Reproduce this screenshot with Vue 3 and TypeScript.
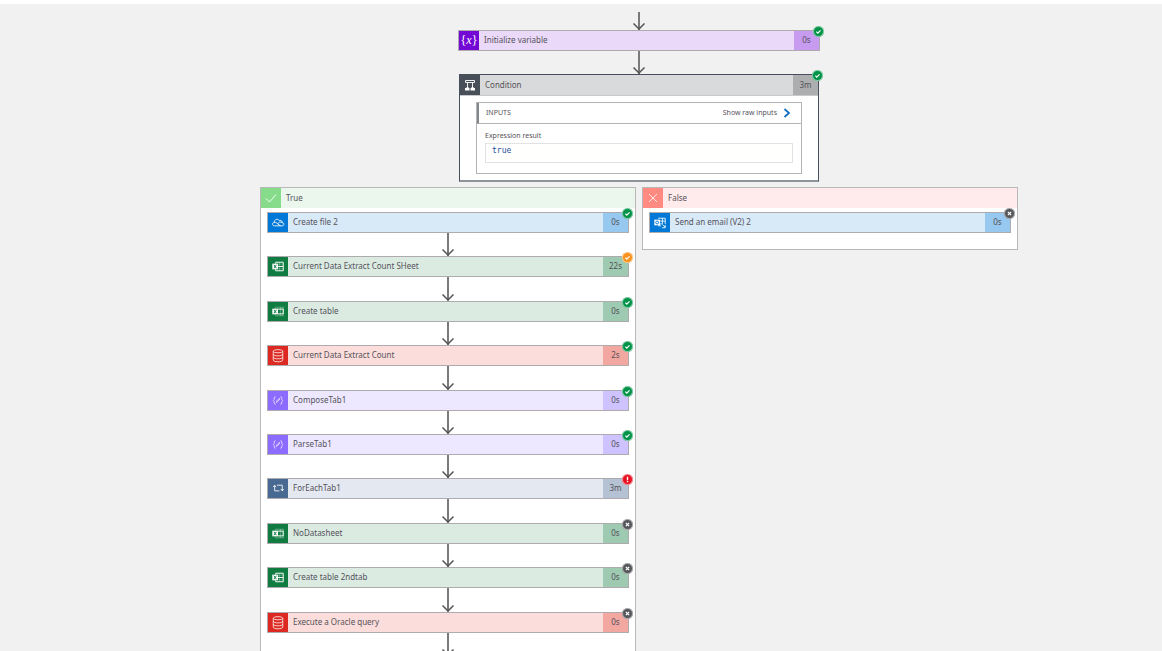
<script setup lang="ts">
type Status = 'ok' | 'warn' | 'fail' | 'skip'
interface Step {
  name: string
  time: string
  icon: string
  tone: string
  status: Status
}

const trueSteps: Step[] = [
  { name: 'Create file 2', time: '0s', icon: 'cloud', tone: 'blue', status: 'ok' },
  { name: 'Current Data Extract Count SHeet', time: '22s', icon: 'excel', tone: 'green', status: 'warn' },
  { name: 'Create table', time: '0s', icon: 'sheet', tone: 'green', status: 'ok' },
  { name: 'Current Data Extract Count', time: '2s', icon: 'database', tone: 'red', status: 'ok' },
  { name: 'ComposeTab1', time: '0s', icon: 'compose', tone: 'violet', status: 'ok' },
  { name: 'ParseTab1', time: '0s', icon: 'compose', tone: 'violet', status: 'ok' },
  { name: 'ForEachTab1', time: '3m', icon: 'loop', tone: 'slate', status: 'fail' },
  { name: 'NoDatasheet', time: '0s', icon: 'sheet', tone: 'green', status: 'skip' },
  { name: 'Create table 2ndtab', time: '0s', icon: 'excel', tone: 'green', status: 'skip' },
  { name: 'Execute a Oracle query', time: '0s', icon: 'database', tone: 'red', status: 'skip' },
]

const falseSteps: Step[] = [
  { name: 'Send an email (V2) 2', time: '0s', icon: 'outlook', tone: 'blue', status: 'skip' },
]
</script>

<template>
  <svg class="sprite" aria-hidden="true">
    <symbol id="i-condition" viewBox="0 0 20 20">
      <path d="M5.500 5.500h9v2h-9zM7.500 7.500v5M12.500 7.500v5" fill="none" stroke="currentColor" stroke-width=".9" />
      <path d="M6.500 12h2v1h1v2.500h-4.500V13h1.500zM11.500 12h2v1h1.500v2.500h-4.500V13h1z" fill="currentColor" />
    </symbol>
    <symbol id="i-cloud" viewBox="0 0 20 20">
      <path d="M6.500 13.500C3.500 13.500 3.500 10.200 6 10C6 6.500 10 5.500 11.500 8C13.500 7.300 14.800 8.800 14.500 10.200C17 10.500 16.500 13.500 14.300 13.500zM6 10C8 9.500 9 10.500 9.500 11.500L11.800 9.200L14.500 10.200M9.500 11.500L12.500 13.300" fill="none" stroke="currentColor" stroke-width=".9" />
    </symbol>
    <symbol id="i-excel" viewBox="0 0 20 20">
      <path d="M7.500 7V5.500h8v9h-8V13M10 10h5.500" fill="none" stroke="currentColor" />
      <path d="M10 7.500h5.500M10 12.500h5.500M11.500 5.500v9" fill="none" stroke="currentColor" stroke-width=".5" opacity=".6" />
      <path d="M4 7h6v6H4z" fill="currentColor" />
      <path d="M5.700 8.200l2.600 3.600M8.300 8.200l-2.600 3.600" stroke="#107c41" />
    </symbol>
    <symbol id="i-sheet" viewBox="0 0 20 20">
      <path d="M10 7.500h5.500v5H10" fill="none" stroke="currentColor" />
      <path d="M8 5.500h8M8 14.500h8M12.500 5.500v9M15.500 5.500v9M7.500 5v2M7.500 13v2" fill="none" stroke="currentColor" stroke-width=".6" opacity=".55" />
      <path d="M4 7h6v6H4z" fill="currentColor" />
      <path d="M5.700 8.200l2.600 3.600M8.300 8.200l-2.600 3.600" stroke="#107c41" />
    </symbol>
    <symbol id="i-database" viewBox="0 0 20 20">
      <g fill="none" stroke="currentColor" stroke-width=".8">
        <ellipse cx="10" cy="5.500" rx="5" ry="1.700" />
        <path d="M5 5.500v9.300c0 2.400 10 2.400 10 0V5.500M5 8.600c0 2.400 10 2.400 10 0M5 11.700c0 2.400 10 2.400 10 0" />
      </g>
    </symbol>
    <symbol id="i-compose" viewBox="0 0 20 20">
      <path d="M7.500 6q-1.500 0-1.500 1.500v1.500l-1 1 1 1v1.500q0 1.500 1.500 1.500M12.500 6q1.500 0 1.500 1.500v1.500l1 1-1 1v1.500q0 1.500-1.500 1.500M8.300 12.200l.5-1.800 2.500-2.700 .7 .8-2.500 2.700z" fill="none" stroke="currentColor" stroke-width=".7" />
    </symbol>
    <symbol id="i-loop" viewBox="0 0 20 20">
      <path d="M9 6.500h5.500v6M11.500 12.500H6.500v-5.500M5 8.500l1.500-2L8 8.500M13 10.500l1.500 2L16 10.500" fill="none" stroke="currentColor" stroke-width=".9" />
    </symbol>
    <symbol id="i-outlook" viewBox="0 0 20 20">
      <path d="M8 5.500h7.500v6M10 8.500h5.500M12.500 5.500v6M10 11.500h2M8 13.500h3M12.500 12l3 3M15.500 12.500v3H12" fill="none" stroke="currentColor" stroke-width=".9" />
      <path d="M4 7h6v6H4z" fill="currentColor" />
      <circle cx="7" cy="10" r="1.500" fill="none" stroke="#0078d7" />
    </symbol>
    <symbol id="i-true" viewBox="0 0 20 20">
      <path d="M5 10.500l3.500 3.500L15 6.500" fill="none" stroke="currentColor" stroke-width=".9" />
    </symbol>
    <symbol id="i-false" viewBox="0 0 20 20">
      <path d="M6 6l8 8M14 6l-8 8" fill="none" stroke="currentColor" stroke-width=".8" />
    </symbol>
    <symbol id="s-ok" viewBox="0 0 12 12">
      <path d="M3.700 6.200l1.500 1.500 3-3" fill="none" stroke="#fff" stroke-width="1.300" />
    </symbol>
    <symbol id="s-warn" viewBox="0 0 12 12">
      <path d="M3.700 6.200l1.500 1.500 3-3" fill="none" stroke="#fff" stroke-width="1.300" />
    </symbol>
    <symbol id="s-fail" viewBox="0 0 12 12">
      <path d="M6 3v3.700M6 7.700v1.300" stroke="#fff" stroke-width="1.500" />
    </symbol>
    <symbol id="s-skip" viewBox="0 0 12 12">
      <path d="M4.200 4.200l3.600 3.600M7.800 4.200l-3.600 3.600" stroke="#fff" stroke-width="1.300" />
    </symbol>
    <symbol id="arrow-head" viewBox="0 0 12 7">
      <path d="M.5 .5L6 6L11.500 .5" fill="none" stroke="#555" stroke-width="1.500" />
    </symbol>
  </svg>

  <main class="canvas">
    <div class="arrow lead"><svg class="head"><use href="#arrow-head" /></svg></div>
    <button type="button" class="card top-card purple">
      <span class="icon glyph">{<i>x</i>}</span>
      <span class="name">Initialize variable</span>
      <span class="time">0s</span>
      <svg class="badge ok"><use href="#s-ok" /></svg>
    </button>
    <div class="arrow link"><svg class="head"><use href="#arrow-head" /></svg></div>

    <section class="condition">
      <button type="button" class="card gray">
        <svg class="icon"><use href="#i-condition" /></svg>
        <span class="name">Condition</span>
        <span class="time">3m</span>
        <svg class="badge ok"><use href="#s-ok" /></svg>
      </button>
      <div class="inputs">
        <header class="inputs-head">
          <span>INPUTS</span>
          <button type="button" class="raw">
            Show raw inputs
            <svg class="chevron" viewBox="0 0 8 10"><path d="M1.500 1L6 5L1.500 9" fill="none" stroke="#0f6cbd" stroke-width="1.700" /></svg>
          </button>
        </header>
        <div class="result">
          <label for="expression">Expression result</label>
          <input id="expression" type="text" value="true" readonly>
        </div>
      </div>
    </section>

    <div class="branches">
      <section class="branch yes">
        <header class="branch-head">
          <svg class="icon"><use href="#i-true" /></svg>
          <span class="name">True</span>
        </header>
        <ol class="steps chain">
          <li v-for="step in trueSteps" :key="step.name" class="step">
            <button type="button" class="card" :class="step.tone">
              <svg class="icon"><use :href="'#i-' + step.icon" /></svg>
              <span class="name">{{ step.name }}</span>
              <span class="time">{{ step.time }}</span>
              <svg class="badge" :class="step.status"><use :href="'#s-' + step.status" /></svg>
            </button>
            <div class="arrow"><svg class="head"><use href="#arrow-head" /></svg></div>
          </li>
        </ol>
      </section>

      <section class="branch no">
        <header class="branch-head">
          <svg class="icon"><use href="#i-false" /></svg>
          <span class="name">False</span>
        </header>
        <ol class="steps">
          <li v-for="step in falseSteps" :key="step.name" class="step">
            <button type="button" class="card" :class="step.tone">
              <svg class="icon"><use :href="'#i-' + step.icon" /></svg>
              <span class="name">{{ step.name }}</span>
              <span class="time">{{ step.time }}</span>
              <svg class="badge" :class="step.status"><use :href="'#s-' + step.status" /></svg>
            </button>
          </li>
        </ol>
      </section>
    </div>
  </main>
</template>

<style>
body {
  margin: 0;
  background: #fff;
}
</style>

<style scoped>
.sprite {
  position: absolute;
  width: 0;
  height: 0;
}

.canvas {
  box-sizing: border-box;
  height: 100vh;
  overflow: hidden;
  display: flex;
  flex-direction: column;
  align-items: center;
  padding: 8px 0 0 116px;
  border-top: 4px solid #fff;
  background: #f1f1f1;
  font-family: "Noto Sans", "Open Sans", sans-serif;
  font-size: 8px;
  line-height: 12px;
  color: #55525a;
}

button {
  margin: 0;
  padding: 0;
  border: 0;
  background: none;
  color: inherit;
  font: inherit;
  text-align: left;
  cursor: pointer;
}

.arrow {
  position: relative;
  flex: 1;
  width: 12px;
  align-self: center;
  background: linear-gradient(#7a7a7a, #7a7a7a) center / 2px 100% no-repeat;
}

.arrow.lead {
  flex: none;
  height: 18px;
}

.arrow.link {
  flex: none;
  height: 23px;
}

.head {
  position: absolute;
  left: 0;
  bottom: 0;
  width: 12px;
  height: 7px;
}

.card {
  position: relative;
  box-sizing: border-box;
  flex: none;
  display: flex;
  align-items: stretch;
  width: 100%;
  height: 21px;
  border: 1px solid #aeaaae;
  background: var(--body);
}

.top-card {
  width: 362px;
}

.icon {
  flex: none;
  width: 20px;
  height: 20px;
  color: #fff;
  background: var(--strong);
}

.card .icon {
  height: 19px;
}

.glyph {
  font: 12px/18px "Liberation Serif", serif;
  text-align: center;
}

.name {
  flex: 1;
  padding-left: 5px;
  line-height: 20px;
  white-space: nowrap;
}

.card .name,
.card .time {
  line-height: 18px;
}

.time {
  width: 25px;
  text-align: center;
  background: var(--time);
}

.purple { --strong: #7209d4; --body: #ead9f8; --time: #c79bef; }
.gray { --strong: #484f58; --body: #d9dadb; --time: #acaeb0; }
.blue { --strong: #0078d7; --body: #d8e9f8; --time: #97c8ef; }
.green { --strong: #107c41; --body: #dbebe2; --time: #9dcab1; }
.red { --strong: #dc2a22; --body: #fbdedb; --time: #f2a8a1; }
.violet { --strong: #8c6cff; --body: #ede8ff; --time: #cfc3ff; }
.slate { --strong: #486991; --body: #e4e8f0; --time: #b5c2d3; }

.badge {
  position: absolute;
  top: -5px;
  right: -5px;
  width: 11px;
  height: 11px;
  box-sizing: border-box;
  border-radius: 50%;
  box-shadow: inset 0 0 0 1px #ffffff80;
}

.badge.ok { background: #009348; }
.badge.warn { background: #f7931e; }
.badge.fail { background: #e81123; }
.badge.skip { background: #55565a; }

.condition {
  box-sizing: border-box;
  flex: none;
  width: 360px;
  border: 1px solid #484f5c;
  border-bottom: 2px solid #8e949a;
  background: #fff;
}

.condition > .card {
  height: 21px;
  border-width: 0 0 1px;
  border-color: #c8c9ca;
}

.condition > .card .icon {
  height: 20px;
}

.condition > .card .name,
.condition > .card .time {
  line-height: 20px;
}

.inputs {
  margin: 6px 16px;
  border: 1px solid #b4b4b4;
  font-size: 7px;
}

.inputs-head {
  display: flex;
  align-items: center;
  justify-content: space-between;
  height: 20px;
  padding: 0 10px 0 7px;
  border-left: 2px solid #84878e;
  border-bottom: 1px solid #b4b4b4;
}

.raw {
  display: flex;
  align-items: center;
  gap: 6px;
}

.chevron {
  width: 8px;
  height: 10px;
}

.result {
  display: flex;
  flex-direction: column;
  gap: 1px;
  padding: 6px 8px 10px;
}

.result input {
  box-sizing: border-box;
  width: 100%;
  height: 20px;
  padding: 0 6px 5px;
  border: 1px solid #e2e2e2;
  border-radius: 0;
  outline: 0;
  background: #fffffd;
  color: #1f50a0;
  font: 8px/12px "DejaVu Sans Mono", monospace;
}

.branches {
  flex: none;
  display: flex;
  align-items: flex-start;
  gap: 6px;
  margin-top: 5px;
}

.branch {
  box-sizing: border-box;
  width: 376px;
  border: 1px solid #b8b8b8;
  background: #fff;
}

.branch-head {
  display: flex;
  background: var(--body);
}

.yes { --strong: #86dc8b; --body: #ebf7ed; }
.no { --strong: #ff8a82; --body: #ffebeb; }

.steps {
  margin: 0;
  padding: 4px 6px 16px;
  list-style: none;
}

.chain {
  display: grid;
  grid-template-rows: repeat(10, 1fr);
  min-height: 444px;
}

.step {
  display: flex;
  flex-direction: column;
}
</style>
